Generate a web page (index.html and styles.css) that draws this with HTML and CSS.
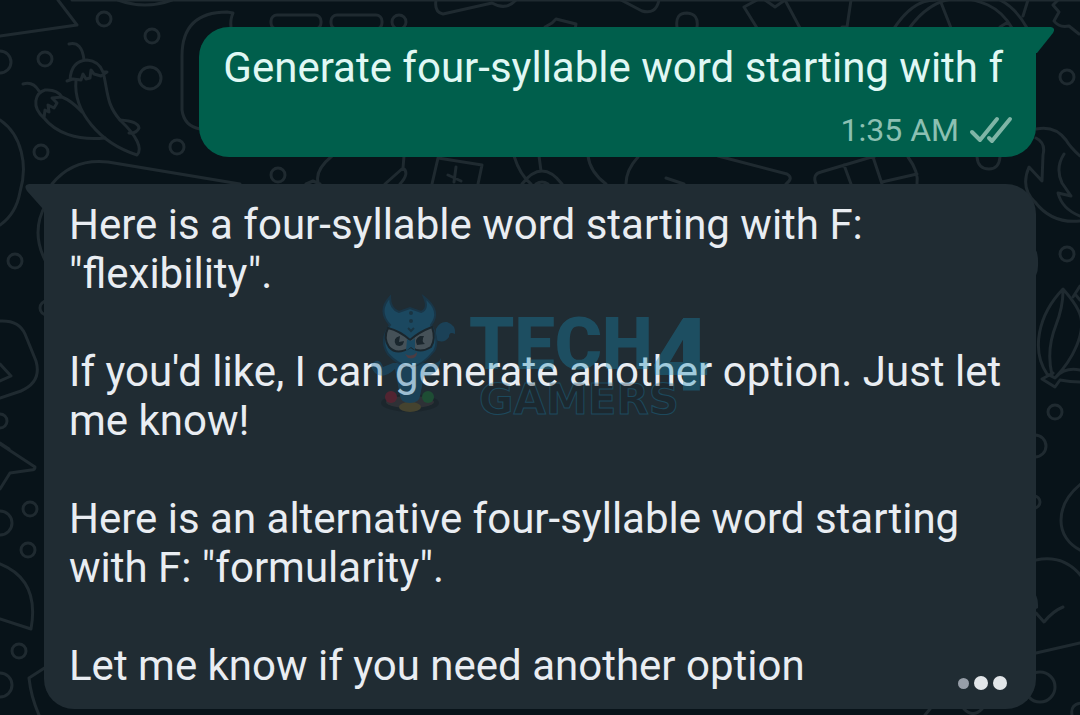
FILE: index.html
```
<!DOCTYPE html>
<html lang="en">
<head>
    <meta charset="UTF-8">
    <meta name="viewport" content="width=device-width, initial-scale=1.0">
    <title>Chat</title>
    <link rel="stylesheet" href="styles.css">
</head>
<body>
    <!-- Doodle wallpaper -->
    <svg class="wallpaper" viewBox="0 0 1080 715" preserveAspectRatio="xMidYMid slice" aria-hidden="true">
        <path d="M72 0H1080" />
        <path d="M58 0L77 25L0 36M118 0Q145 10 172 0" />
        <circle cx="104" cy="19" r="7" />
        <circle cx="152" cy="36" r="7" />
        <circle cx="45" cy="59" r="7" />
        <circle cx="0" cy="62" r="11" />
        <circle cx="150" cy="78" r="11" />
        <circle cx="177" cy="147" r="7" />
        <circle cx="41" cy="152" r="7" />
        <circle cx="278" cy="175" r="7" />
        <!-- chillies -->
        <path d="M69 44Q82 41 84 60M70 80Q71 61 87 60Q99 61 103 72L107 72L101 76L94 74L91 70L90 78L86 79L83 74L81 80L73 79L67 81Z" />
        <path d="M76 80C73 112 100 143 137 155C143 149 137 136 120 120C107 105 108 94 104 76" />
        <path d="M23 84Q33 81 39 91M44 118C31 107 35 93 45 90Q57 89 62 97L52 98L57 103L54 108L48 105L49 112L45 110L44 118C55 132 76 141 105 138M62 97Q72 101 82 112" />
        <path d="M120 120Q138 121 139 128Q136 134 129 133" />
        <path d="M200 129Q184 126 182 110V56Q182 12 227 12L233 13Q230 20 231 27" />
        <rect x="271" y="15" width="50" height="14" rx="6" />
        <rect x="331" y="15" width="51" height="14" rx="6" />
        <circle cx="399" cy="22" r="7" />
        <path d="M436 0Q434 12 443 14L492 3Q506 11 516 0" />
        <path d="M545 27L552 23L556 19L576 24L575 30" />
        <path d="M621 0L642 11Q656 15 659 0M677 27Q675 13 687 13Q699 14 697 27" />
        <path d="M757 28L744 7L757 0M765 0L775 7L785 0L800 28M851 0L847 27L842 27" />
        <path d="M893 30Q912 0 935 0M908 30Q940-16 988 5Q1003 12 1012 28M940 0L951 28M1000 0Q1016 8 1027 28M1028 0L1023 16M1000 27L1008 22" />
        <path d="M1058 0L1053 5L1059 12L1054 21Q1059 28 1069 26L1079 34" />
        <circle cx="1067" cy="77" r="7" />
        <!-- strip between the two messages -->
        <path d="M0 120C22 135 28 166 20 192Q16 214 0 225" />
        <path d="M52 184Q73 158 108 162L240 184M332 156Q315 170 318 182M306 184L313 181L320 184M404 156L403 168L385 184M403 168Q410 173 400 184M438 158L432 184M438 158L482 165L478 184M456 167L454 182M448 175L461 181" />
        <path d="M514 156Q520 175 531 184M539 156L541 171M522 184Q542 158 562 184M536 184Q542 180 548 184M588 156Q590 172 606 184M638 157Q626 170 626 184M718 156L787 174Q794 178 786 184M666 178L684 184" />
        <path d="M816 184Q812 174 821 172L875 156M844 165L851 184M873 157L882 184M908 157Q919 172 917 184M882 182L917 174M977 157Q978 169 989 169Q999 169 1000 157" />
        <path d="M1036 129Q1055 125 1066 140Q1070 147 1080 156M1036 138Q1046 143 1043 155L1042 181L1029 167Q1020 188 1035 202Q1052 224 1080 221M1064 154Q1055 168 1062 183L1071 196L1058 193Q1062 209 1080 216" />
        <circle cx="1067" cy="254" r="7" />
        <path d="M1063 289C1038 315 1031 350 1047 374L1055 378C1075 357 1084 333 1081 318Q1079 307 1063 289ZM1063 291Q1063 307 1056 325Q1046 350 1052 375M1056 377Q1065 367 1080 370M1053 373L1042 379L1055 387L1060 380Q1070 382 1080 382" />
        <path d="M1073 297L1080 286M1075 294L1080 300" />
        <circle cx="1055" cy="412" r="7" />
        <circle cx="1035" cy="446" r="11" />
        <circle cx="1034" cy="502" r="6" />
        <path d="M1082 483C1054 505 1054 538 1082 551M1036 560Q1064 554 1082 577M1036 613L1044 622Q1053 611 1063 607M1036 653L1080 643" />
        <circle cx="1040" cy="687" r="15" />
        <path d="M1072 715Q1070 704 1082 703" />
        <path class="solid" d="M1030 245Q1039 247 1038 266Q1038 278 1030 280ZM1030 590Q1039 594 1038 608L1030 612Z" />
        <!-- left margin -->
        <path d="M46 204Q30 232 46 262" />
        <circle cx="15" cy="261" r="7" />
        <circle cx="47" cy="308" r="7" />
        <path d="M0 321Q19 320 25 334L36 361Q42 382 21 391L0 398M0 364L11 376L0 381" />
        <circle cx="0" cy="421" r="7" />
        <path d="M0 444L35 467Q35 470 31 470L10 473L0 489" />
        <circle cx="30" cy="509" r="7" />
        <circle cx="0" cy="523" r="12" />
        <circle cx="28" cy="550" r="7" />
        <path d="M0 564Q40 580 31 629L0 619M0 443L9 449" />
        <circle cx="19" cy="651" r="7" />
        <circle cx="0" cy="685" r="12" />
        <path d="M46 667L29 678Q31 697 39 715M925 715L930 709M964 709Q973 718 982 709" />
    </svg>

    <main class="chat">
        <article class="message outgoing">
            <svg class="tail" viewBox="0 0 22 26" aria-hidden="true">
                <path d="M0 0H16Q21 1 18 6L2 26H0Z" />
            </svg>
            <p>Generate four-syllable word starting with f</p>
            <footer class="meta">
                <time datetime="01:35">1:35 AM</time>
                <svg class="ticks" viewBox="0 0 44 28" role="img" aria-label="Delivered">
                    <path d="M3 16L11 24L28 3M20 22L23 25L41 3" />
                </svg>
            </footer>
        </article>

        <article class="message incoming">
            <svg class="tail" viewBox="0 0 20 26" aria-hidden="true">
                <path d="M20 0H4Q-2 1 2 7L18 25L20 26Z" />
            </svg>
            <p>Here is a four-syllable word starting with F: "flexibility".</p>
            <p>If you'd like, I can generate another option. Just let me know!</p>
            <p>Here is an alternative four-syllable word starting with F: "formularity".</p>
            <div class="last-line">
                <p>Let me know if you need another option</p>
                <div class="typing" role="img" aria-label="Typing">
                    <span class="dot faded"></span>
                    <span class="dot"></span>
                    <span class="dot"></span>
                </div>
            </div>

            <!-- Tech4Gamers watermark -->
            <svg class="watermark" viewBox="0 0 360 140" role="img" aria-label="Tech 4 Gamers">
                <g class="mascot">
                    <ellipse cx="40" cy="103" rx="29" ry="9" fill="#141b21" />
                    <ellipse cx="40" cy="102" rx="24" ry="6" fill="#4a3c3c" />
                    <circle cx="21" cy="97" r="6" fill="#b01830" />
                    <circle cx="58" cy="97" r="6" fill="#1c8a38" />
                    <ellipse cx="40" cy="107" rx="11" ry="5" fill="#8a7028" />
                    <path d="M25 69Q13 80 5 73Q-2 65 4 62Q10 58 13 67L23 63L55 63Q68 66 71 58Q69 76 54 76L50 96Q49 103 40 103Q31 103 30 96Z" fill="#126a9c" />
                    <path d="M66 29Q70 21 77 22Q86 25 85 34Q79 31 79 37Q73 45 65 39Z" fill="#126a9c" />
                    <path d="M20 25Q7 11 20-3Q20 9 29 12L40 8L51 12Q59 9 54-3Q72 11 61 25Q70 40 64 51Q52 66 41 67Q29 66 18 54Q9 40 20 25Z" fill="#127db4" stroke="#0d4a70" stroke-width="2" />
                    <path d="M18 28Q30 31 40 40Q49 32 62 27Q66 39 61 47Q50 54 41 47Q27 56 19 47Q13 38 18 28Z" fill="#8b989f" stroke="#101b22" stroke-width="2" />
                    <path d="M37 39Q41 43 45 38L45 50L41 47L36 51Z" fill="#127db4" />
                    <path d="M30 36Q22 38 26 45Q33 48 34 41L29 42ZM50 36Q44 39 47 45L55 44Q51 41 54 36Z" fill="#101b22" />
                    <path d="M35 54Q42 58 47 52Q47 60 38 58Z" fill="#a05a60" />
                    <circle cx="41" cy="13" r="2" fill="#0d4460" />
                    <circle cx="41" cy="21" r="2" fill="#0d4460" />
                    <path d="M38 28L41 31L44 28" fill="none" stroke="#0d4460" stroke-width="2" />
                </g>
                <text class="tech" x="99" y="69">TECH</text>
                <text class="four" x="281" y="90">4</text>
                <text class="gamers" x="109" y="114">GAMERS</text>
            </svg>
        </article>
    </main>
</body>
</html>
```
FILE: styles.css
```
* {
    box-sizing: border-box;
}

body {
    margin: 0;
    min-height: 100vh;
    position: relative;
    overflow-x: hidden;
    background-color: #081319;
    color: #e9edf2;
    font-family: Roboto, "Liberation Sans", sans-serif;
    font-size: 42px;
    line-height: 49px;
}

p {
    margin: 0;
}

/* Wallpaper sits behind the whole chat */
.wallpaper {
    position: absolute;
    top: 0;
    left: 0;
    width: 100%;
    height: 100%;
    fill: none;
    stroke: #1f2a30;
    stroke-width: 3;
    stroke-linejoin: round;
    stroke-linecap: round;
}

.wallpaper .solid {
    fill: #202c33;
    stroke: none;
}

.chat {
    position: relative;
    display: flex;
    flex-direction: column;
    gap: 27px;
    padding: 27px 44px 6px;
}

.message {
    position: relative;
    border-radius: 30px;
    padding: 16px 24px;
}

.tail {
    position: absolute;
    top: 0;
    height: 26px;
}

/* Sent message */
.outgoing {
    align-self: flex-end;
    background-color: #005f4c;
    color: #e0f8f4;
    border-top-right-radius: 0;
    padding: 16px 33px 8px 24px;
}

.outgoing .tail {
    left: 100%;
    width: 22px;
    margin-left: -1px;
    fill: #005f4c;
}

.meta {
    display: flex;
    justify-content: flex-end;
    align-items: center;
    gap: 10px;
    margin-top: 19px;
    margin-right: -10px;
    color: #8cc0b2;
    font-size: 32px;
    line-height: 38px;
}

.ticks {
    width: 44px;
    height: 28px;
    fill: none;
    stroke: #7fb5a6;
    stroke-width: 4;
    stroke-linecap: round;
    stroke-linejoin: round;
}

/* Received message */
.incoming {
    display: flex;
    flex-direction: column;
    gap: 49px;
    background-color: #202c33;
    border-top-left-radius: 0;
    padding-left: 25px;
    padding-bottom: 19px;
}

.incoming .tail {
    right: 100%;
    width: 20px;
    margin-right: -1px;
    fill: #202c33;
}

.last-line {
    display: flex;
    justify-content: space-between;
    align-items: flex-end;
}

.typing {
    display: flex;
    align-items: center;
    gap: 5px;
    padding-right: 5px;
}

.dot {
    width: 14px;
    height: 14px;
    border-radius: 50%;
    background-color: #e2e6e9;
}

.dot.faded {
    width: 11px;
    height: 11px;
    background-color: #969ea8;
}

/* Watermark laid over the text */
.watermark {
    position: absolute;
    top: 116px;
    left: 326px;
    width: 360px;
    height: 140px;
    overflow: visible;
    opacity: 0.35;
    pointer-events: none;
}

.tech,
.four {
    fill: #1a8fb8;
    font-weight: 900;
}

.tech {
    font-size: 72px;
}

.four {
    font-size: 102px;
}

.gamers {
    fill: #17222a;
    stroke: #1a7fa8;
    stroke-width: 1;
    font-family: "DejaVu Sans", sans-serif;
    font-weight: 700;
    font-size: 42px;
}
```
